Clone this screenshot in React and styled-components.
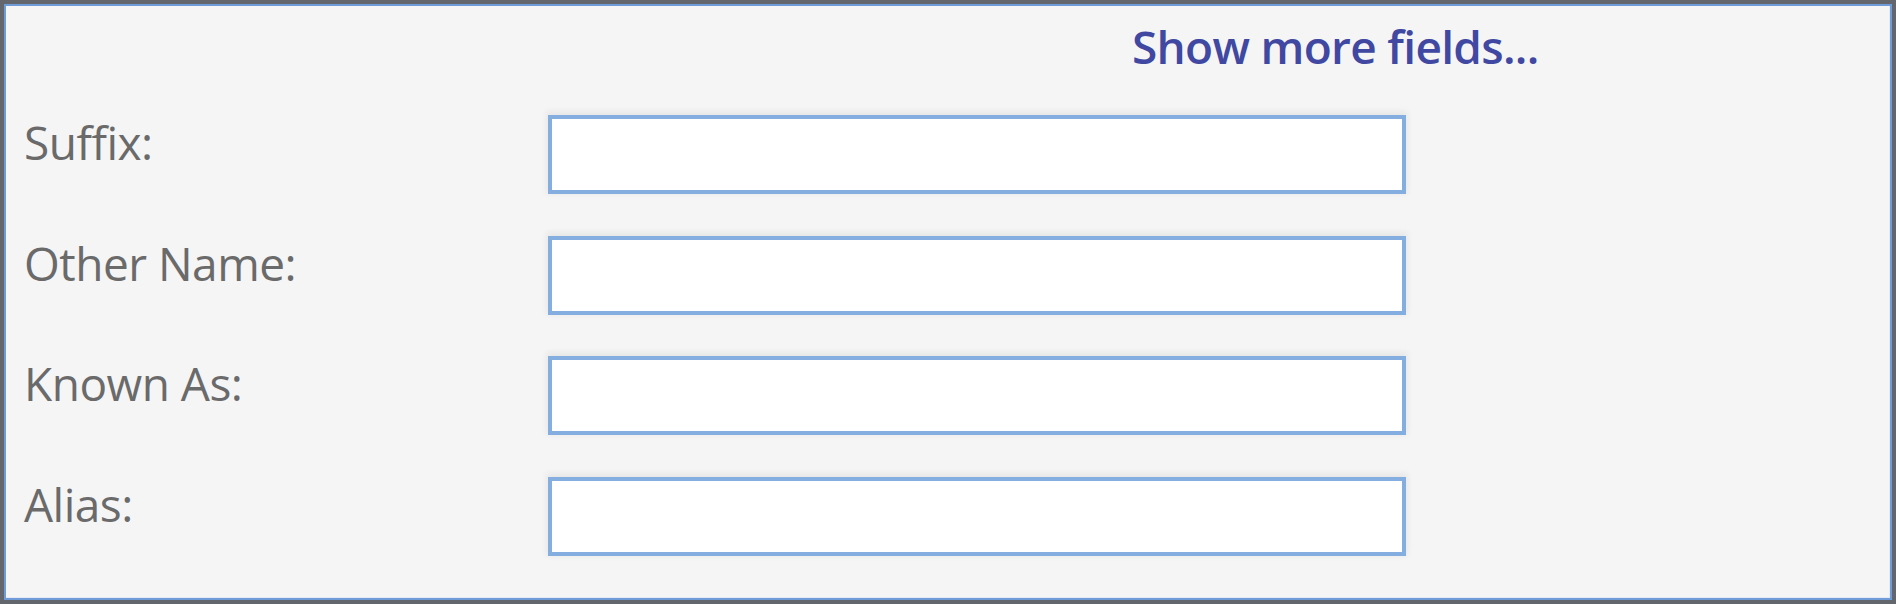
import React from "react";
import styled, { createGlobalStyle } from "styled-components";

const GlobalStyle = createGlobalStyle`
  html, body {
    margin: 0;
    padding: 0;
    background: #f5f5f5;
  }
  * {
    box-sizing: border-box;
  }
`;

const Frame = styled.div`
  width: 1896px;
  height: 604px;
  border: 4px solid #63666c;
  background: #63666c;
`;

const Panel = styled.div`
  height: 100%;
  border: 2px solid #6f9cd8;
  background: #f5f5f5;
  box-shadow: inset -1px -1px 0 #e4ebf6;
  padding: 9px 0 0 16px;
  font-family: "Open Sans", "Noto Sans", sans-serif;
`;

const LinkRow = styled.div`
  display: flex;
  padding-left: 1110px;
  height: 62px;
  margin-bottom: 38px;
`;

const MoreLink = styled.a`
  font-size: 46px;
  line-height: 62px;
  font-weight: 600;
  color: #4048a2;
  text-decoration: none;
  letter-spacing: -0.7px;
  cursor: pointer;
`;

const Fields = styled.div`
  display: grid;
  grid-template-columns: 526px 858px;
  row-gap: 41.67px;
  align-items: start;
`;

const Label = styled.label`
  font-size: 46px;
  line-height: 54px;
  color: #6a6a6a;
  padding-left: 2px;
  letter-spacing: -0.5px;
`;

const TextBox = styled.input`
  height: 79px;
  width: 858px;
  border: 4px solid #85aee0;
  background: #ffffff;
  outline: none;
  box-shadow: 0 -2px 6px 2px rgba(0, 0, 0, 0.055);
  font: inherit;
  font-size: 40px;
  padding: 0 10px;
`;

const fields = ["Suffix:", "Other Name:", "Known As:", "Alias:"];

export default function App() {
  return (
    <>
      <GlobalStyle />
      <Frame>
        <Panel>
          <LinkRow>
            <MoreLink>Show more fields...</MoreLink>
          </LinkRow>
          <Fields>
            {fields.map((name) => (
              <React.Fragment key={name}>
                <Label>{name}</Label>
                <TextBox type="text" />
              </React.Fragment>
            ))}
          </Fields>
        </Panel>
      </Frame>
    </>
  );
}
